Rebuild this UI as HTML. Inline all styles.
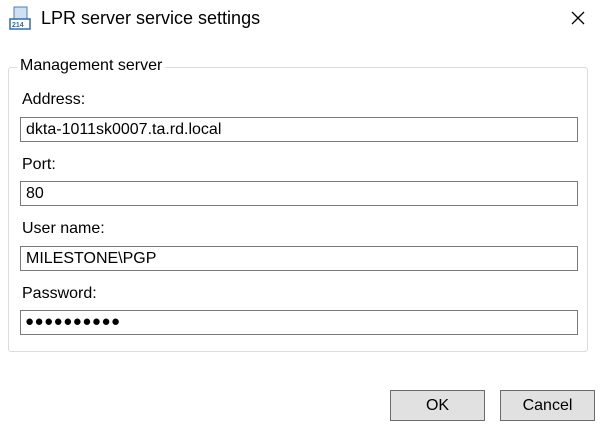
<!DOCTYPE html>
<html><head><style>
body{margin:0;width:600px;height:427px;background:#fff;font-family:"Liberation Sans",sans-serif;color:#000;position:relative;overflow:hidden}
.a{position:absolute}
.lbl{font-size:16px;left:22px}
.in{position:absolute;left:20px;width:558px;height:25px;border:1px solid #7a7a7a;box-sizing:border-box;font-size:16px;padding:3px 0 0 5px}
.btn{position:absolute;top:390px;width:95px;height:31px;background:#e1e1e1;border:1px solid #6a6a6a;box-sizing:border-box;font-size:16px;text-align:center;line-height:29px}
</style></head><body>
<svg class="a" style="left:8px;top:6px" width="24" height="24" viewBox="0 0 24 24">
<rect x="6" y="1" width="13" height="13" fill="#cfe0f0" stroke="#4a7fb5"/>
<rect x="2" y="13" width="20" height="10" fill="#fff" stroke="#2f6fad" stroke-width="1.5"/>
<text x="4" y="21" font-size="7" font-family="Liberation Sans" fill="#2f6fad" font-weight="bold">214</text>
</svg>
<div class="a" style="left:41px;top:8px;font-size:18px">LPR server service settings</div>
<svg class="a" style="left:570px;top:10px" width="16" height="16"><path d="M2 2L14 14M14 2L2 14" stroke="#000" stroke-width="1.3"/></svg>
<div class="a" style="left:8px;top:67px;width:580px;height:285px;border:1px solid #dcdcdc;border-radius:3px;box-sizing:border-box"></div>
<div class="a" style="left:17px;top:57px;background:#fff;padding:0 3px;font-size:16px">Management server</div>
<div class="a lbl" style="top:91px">Address:</div>
<div class="in" style="top:117px">dkta-1011sk0007.ta.rd.local</div>
<div class="a lbl" style="top:156px">Port:</div>
<div class="in" style="top:181px">80</div>
<div class="a lbl" style="top:220px">User name:</div>
<div class="in" style="top:246px">MILESTONE\PGP</div>
<div class="a lbl" style="top:285px">Password:</div>
<div class="in" style="top:310px;font-size:15px;letter-spacing:0.5px;padding-top:2px;padding-left:4px">●●●●●●●●●●</div>
<div class="btn" style="left:390px">OK</div>
<div class="btn" style="left:500px">Cancel</div>
</body></html>
